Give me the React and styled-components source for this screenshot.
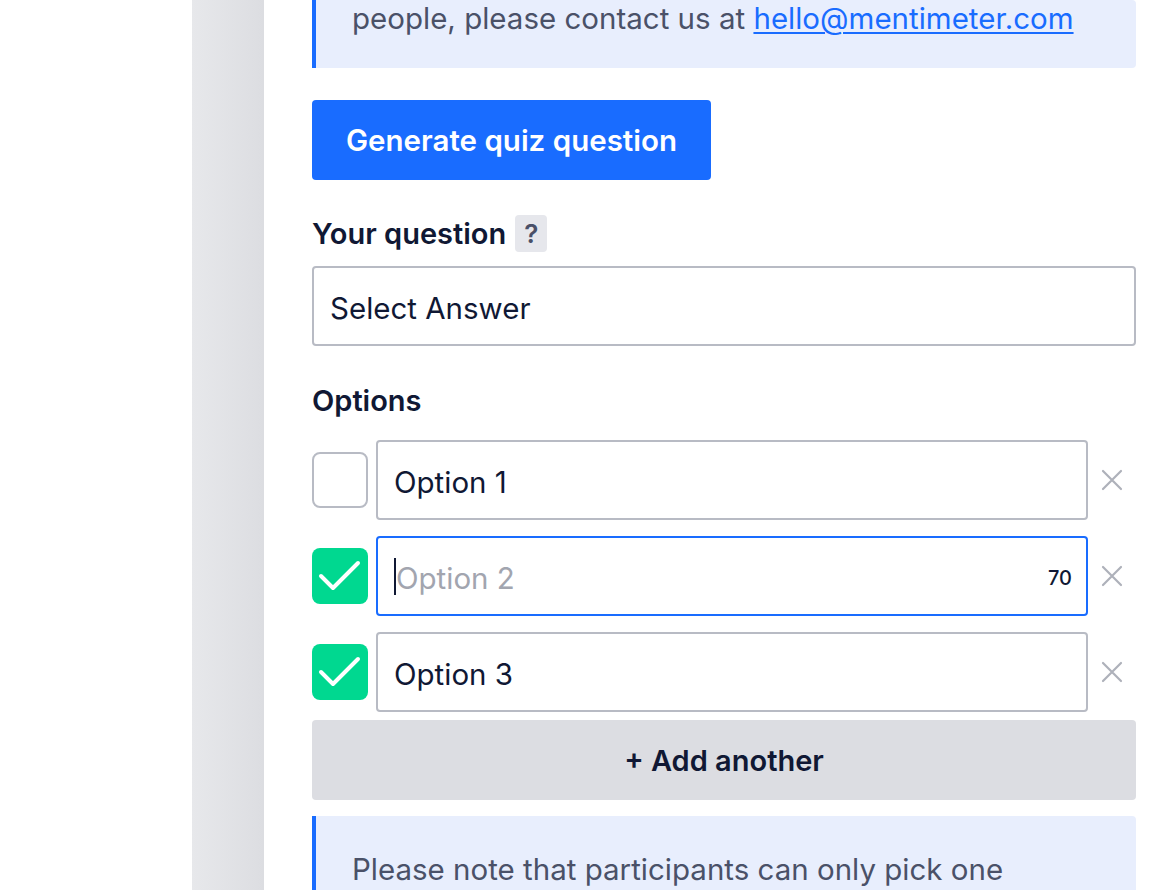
import React from "react";
import styled, { createGlobalStyle } from "styled-components";

const Global = createGlobalStyle`
  html, body { margin: 0; padding: 0; background: #fff; }
  body { font-family: Inter, "Noto Sans", sans-serif; color: #101834; }
  * { box-sizing: border-box; }
`;

const Page = styled.div`
  display: flex;
  width: 1174px;
  height: 890px;
  overflow: hidden;
  background: #fff;
`;

const Gutter = styled.div`
  width: 192px;
  flex: none;
`;

const Sidebar = styled.div`
  width: 72px;
  flex: none;
  background: linear-gradient(to right, #e7e8eb, #dcdde1);
`;

const Main = styled.main`
  flex: 1;
  padding: 0 38px 0 48px;
  display: flex;
  flex-direction: column;
`;

const Note = styled.div`
  flex: none;
  background: #e8eefd;
  border-left: 4px solid #196cff;
  border-radius: 0 4px 4px 0;
  padding: ${(p) => p.$pad};
  font-size: 29.5px;
  line-height: 36px;
  color: #4a5168;
  margin-top: ${(p) => p.$mt || "0"};
`;

const Link = styled.a`
  color: #196cff;
  text-decoration: underline;
  text-decoration-thickness: 2px;
  text-underline-offset: 3px;
`;

const PrimaryButton = styled.button`
  flex: none;
  align-self: flex-start;
  margin-top: 32px;
  height: 80px;
  padding: 0 34px;
  border: none;
  border-radius: 4px;
  background: #196cff;
  color: #fff;
  font-family: inherit;
  font-size: 29.5px;
  font-weight: 600;
`;

const Label = styled.div`
  flex: none;
  display: flex;
  align-items: center;
  gap: 9px;
  margin-top: ${(p) => p.$mt};
  font-size: 29px;
  font-weight: 600;
  height: 38px;
`;

const Help = styled.span`
  width: 32px;
  height: 37px;
  border-radius: 4px;
  background: #e6e7ec;
  color: #4a5068;
  display: inline-flex;
  align-items: center;
  justify-content: center;
  font-size: 26px;
  font-weight: 600;
`;

const Field = styled.div`
  flex: 1 1 auto;
  height: 80px;
  border: 2px solid ${(p) => (p.$focused ? "#196cff" : "#b8bbc4")};
  border-radius: 4px;
  display: flex;
  align-items: center;
  padding: 3px 14px 0 16px;
  font-size: 29.5px;
  color: ${(p) => (p.$placeholder ? "#a2a5af" : "#101834")};
  margin-top: ${(p) => p.$mt || "0"};
`;

const QuestionField = styled(Field)`
  flex: none;
`;

const Caret = styled.span`
  width: 2px;
  height: 37px;
  margin-top: -3px;
  background: #101834;
`;

const Counter = styled.span`
  margin-left: auto;
  font-size: 20px;
  font-weight: 500;
  color: #101834;
`;

const Options = styled.div`
  flex: none;
  display: flex;
  flex-direction: column;
  gap: 16px;
  margin-top: 21px;
`;

const Row = styled.div`
  display: flex;
  align-items: center;
  gap: 8px;
`;

const Check = styled.div`
  width: 56px;
  height: 56px;
  flex: none;
  border-radius: 8px;
  border: ${(p) => (p.$checked ? "none" : "2px solid #b8bbc4")};
  background: ${(p) => (p.$checked ? "#00d890" : "#fff")};
  display: flex;
  align-items: center;
  justify-content: center;
`;

const Remove = styled.button`
  width: 40px;
  height: 40px;
  flex: none;
  border: none;
  background: none;
  padding: 0 8px 0 0;
  display: flex;
  align-items: center;
  justify-content: center;
`;

const AddButton = styled.button`
  margin-top: 8px;
  height: 80px;
  flex: none;
  border: none;
  border-radius: 4px;
  background: #dcdde2;
  color: #101834;
  font-family: inherit;
  font-size: 29px;
  font-weight: 600;
`;

const Tick = () => (
  <svg width="56" height="56" viewBox="0 0 56 56" fill="none">
    <path d="M9 28 L21 40 L46 15" stroke="#fff" strokeWidth="4" strokeLinecap="round" strokeLinejoin="round" />
  </svg>
);

const Cross = () => (
  <svg width="22" height="22" viewBox="0 0 22 22" fill="none">
    <path d="M2 2 L20 20 M20 2 L2 20" stroke="#aeb1ba" strokeWidth="2.2" strokeLinecap="round" />
  </svg>
);

const options = [
  { text: "Option 1", checked: false },
  { text: "Option 2", checked: true, focused: true, placeholder: true },
  { text: "Option 3", checked: true },
];

export default function App() {
  return (
    <>
      <Global />
      <Page>
        <Gutter />
        <Sidebar />
        <Main>
          <Note $pad="0 36px 32px 36px">
            people, please contact us at <Link href="#">hello@mentimeter.com</Link>
          </Note>
          <PrimaryButton>Generate quiz question</PrimaryButton>
          <Label $mt="34px">
            Your question <Help>?</Help>
          </Label>
          <QuestionField $mt="14px">Select Answer</QuestionField>
          <Label $mt="35px">Options</Label>
          <Options>
            {options.map((o) => (
              <Row key={o.text}>
                <Check $checked={o.checked}>{o.checked && <Tick />}</Check>
                <Field $focused={o.focused} $placeholder={o.placeholder}>
                  {o.focused && <Caret />}
                  {o.text}
                  {o.focused && <Counter>70</Counter>}
                </Field>
                <Remove aria-label="Remove">
                  <Cross />
                </Remove>
              </Row>
            ))}
          </Options>
          <AddButton>+ Add another</AddButton>
          <Note $pad="35px 36px 30px 36px" $mt="16px">
            Please note that participants can only pick one
          </Note>
        </Main>
      </Page>
    </>
  );
}
